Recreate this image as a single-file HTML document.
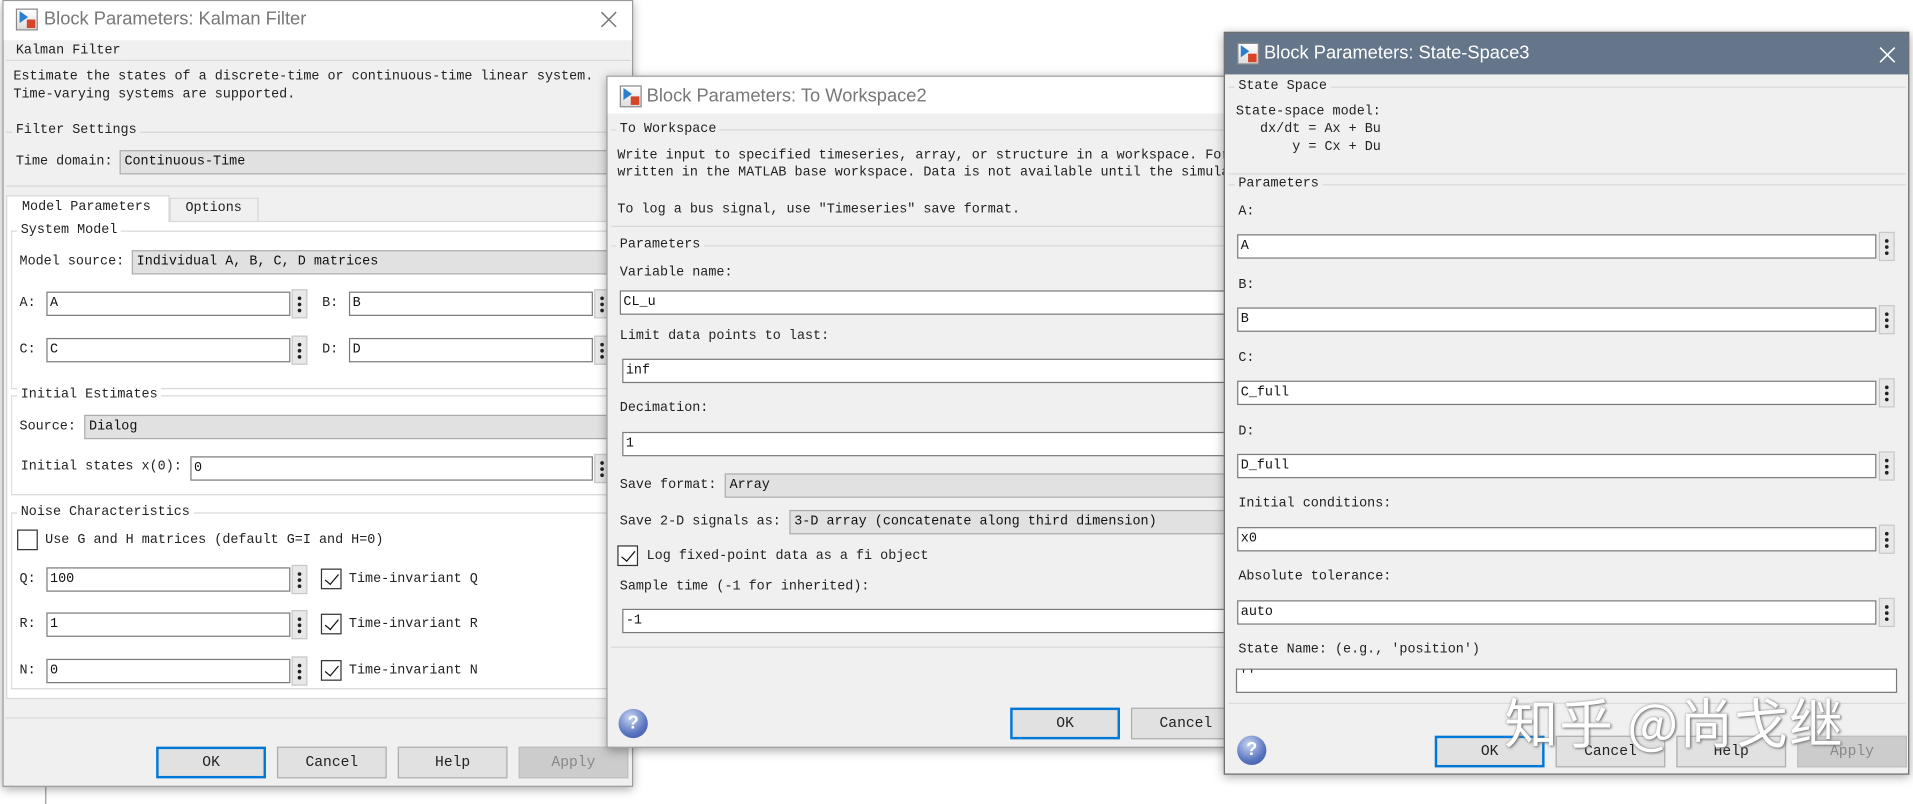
<!DOCTYPE html>
<html><head><meta charset="utf-8"><style>
*{box-sizing:border-box;margin:0;padding:0}
html,body{width:1913px;height:804px;overflow:hidden;background:#fff}
#w{position:absolute;left:0;top:0;width:1568px;height:659px;transform:scale(1.22003);transform-origin:0 0}
.a{position:absolute}
.t{position:absolute;font-family:"Liberation Mono","Noto Sans CJK SC",monospace;font-size:11px;color:#222;white-space:pre;line-height:14px}
.dlg{position:absolute;background:#f0f0f0;border:1px solid #9a9a9a;box-shadow:0 2px 8px rgba(0,0,0,.35)}
.tb{position:absolute;left:0;top:0;right:0;background:#fff}
.tt{position:absolute;font-family:"Liberation Sans",sans-serif;font-size:15px;color:#777;white-space:nowrap}
.ic{position:absolute;width:18px;height:18px;border:1px solid #888;background:linear-gradient(#fff,#ddd)}
.ic:before{content:"";position:absolute;left:2px;top:1px;border-left:7px solid #2a7fd0;border-top:5px solid transparent;border-bottom:5px solid transparent}
.ic:after{content:"";position:absolute;left:8px;top:8px;width:7px;height:7px;background:#d5452a}
.gb{position:absolute;border-top:1px solid #d8d8d8;border-bottom:1px solid #d8d8d8}
.f{position:absolute;height:20px;background:#fff;border:1px solid #7a7a7a;font-family:"Liberation Mono",monospace;font-size:11px;line-height:18px;padding-left:2px;color:#111;white-space:nowrap;overflow:hidden}
.dd{position:absolute;height:20px;background:#e1e1e1;border:1px solid #adadad;font-family:"Liberation Mono",monospace;font-size:11px;line-height:18px;padding-left:3px;color:#111;white-space:nowrap;overflow:hidden}
.dots{position:absolute;width:13px;height:24px;background:#e8e8e8;border:1px solid #c8c8c8}
.dots:before{content:"";position:absolute;left:4px;top:5px;width:3px;height:3px;background:#222;border-radius:50%;box-shadow:0 5px 0 #222,0 10px 0 #222}
.cb{position:absolute;width:17px;height:17px;background:#fff;border:1px solid #333}
.cb.k:after{content:"";position:absolute;left:5px;top:1px;width:5px;height:10px;border-right:1.5px solid #111;border-bottom:1.5px solid #111;transform:rotate(40deg)}
.bt{position:absolute;height:26px;width:90px;background:#e1e1e1;border:1px solid #adadad;font-family:"Liberation Mono",monospace;font-size:12px;line-height:24px;text-align:center;color:#222}
.bt.ok{border:2px solid #0078d7;line-height:22px}
.bt.dis{background:#ccc;border-color:#bfbfbf;color:#888}
.hp{position:absolute;width:24px;height:24px;border-radius:50%;background:radial-gradient(circle at 40% 30%,#c9d6f2,#5a74c0 60%,#3a50a0);color:#fff;font:bold 15px "Liberation Sans",sans-serif;text-align:center;line-height:24px}
</style></head><body><div id="w">

<div class="a" style="left:37px;top:640px;width:1px;height:19px;background:#999"></div>
<div class="a" style="left:490px;top:60px;width:14px;height:560px;background:#e8e8e8;border:1px solid #bbb"></div>

<!-- Kalman dialog -->
<div class="dlg" style="left:2px;top:0;width:517px;height:645px">
 <div class="tb" style="height:32px"></div>
 <div class="ic" style="left:10px;top:6px"></div>
 <div class="tt" style="left:33px;top:6px">Block Parameters: Kalman Filter</div>
 <svg class="a" style="left:489px;top:8px" width="14" height="14"><path d="M1 1L13 13M13 1L1 13" stroke="#777" stroke-width="1.2"/></svg>
</div>
<div class="gb" style="left:5px;top:49px;width:512px;height:60px"></div>
<div class="t" style="left:10px;top:35px;background:#f0f0f0;padding:0 3px">Kalman Filter</div>
<div class="t" style="left:11px;top:56px">Estimate the states of a discrete-time or continuous-time linear system.</div>
<div class="t" style="left:11px;top:71px">Time-varying systems are supported.</div>
<div class="gb" style="left:5px;top:108px;width:512px;height:45px"></div>
<div class="t" style="left:10px;top:100px;background:#f0f0f0;padding:0 3px">Filter Settings</div>
<div class="t" style="left:13px;top:126px">Time domain:</div>
<div class="dd" style="left:98px;top:123px;width:412px">Continuous-Time</div>

<div class="a" style="left:5px;top:181px;width:510px;height:392px;background:#fff;border:1px solid #d8d8d8"></div>
<div class="a" style="left:5px;top:160px;width:134px;height:22px;background:#fff;border:1px solid #d8d8d8;border-bottom:none"></div>
<div class="a" style="left:139px;top:162px;width:73px;height:20px;background:#f0f0f0;border:1px solid #d8d8d8"></div>
<div class="t" style="left:18px;top:163px">Model Parameters</div>
<div class="t" style="left:152px;top:164px">Options</div>

<div class="gb" style="left:9px;top:189px;width:506px;height:130px;border-left:1px solid #e0e0e0"></div>
<div class="t" style="left:14px;top:182px;background:#fff;padding:0 3px">System Model</div>
<div class="t" style="left:16px;top:208px">Model source:</div>
<div class="dd" style="left:108px;top:205px;width:400px">Individual A, B, C, D matrices</div>
<div class="t" style="left:16px;top:242px">A:</div><div class="f" style="left:38px;top:239px;width:200px">A</div><div class="dots" style="left:239px;top:237px"></div>
<div class="t" style="left:264px;top:242px">B:</div><div class="f" style="left:286px;top:239px;width:200px">B</div><div class="dots" style="left:487px;top:237px"></div>
<div class="t" style="left:16px;top:280px">C:</div><div class="f" style="left:38px;top:277px;width:200px">C</div><div class="dots" style="left:239px;top:275px"></div>
<div class="t" style="left:264px;top:280px">D:</div><div class="f" style="left:286px;top:277px;width:200px">D</div><div class="dots" style="left:487px;top:275px"></div>

<div class="gb" style="left:9px;top:324px;width:506px;height:82px;border-left:1px solid #e0e0e0"></div>
<div class="t" style="left:14px;top:317px;background:#fff;padding:0 3px">Initial Estimates</div>
<div class="t" style="left:16px;top:343px">Source:</div>
<div class="dd" style="left:69px;top:340px;width:440px">Dialog</div>
<div class="t" style="left:17px;top:376px">Initial states x(0):</div>
<div class="f" style="left:156px;top:374px;width:330px">0</div><div class="dots" style="left:487px;top:372px"></div>

<div class="gb" style="left:9px;top:420px;width:506px;height:145px;border-left:1px solid #e0e0e0"></div>
<div class="t" style="left:14px;top:413px;background:#fff;padding:0 3px">Noise Characteristics</div>
<div class="cb" style="left:14px;top:434px"></div>
<div class="t" style="left:37px;top:436px">Use G and H matrices (default G=I and H=0)</div>
<div class="t" style="left:16px;top:468px">Q:</div><div class="f" style="left:38px;top:465px;width:200px">100</div><div class="dots" style="left:239px;top:463px"></div>
<div class="cb k" style="left:263px;top:466px"></div><div class="t" style="left:286px;top:468px">Time-invariant Q</div>
<div class="t" style="left:16px;top:505px">R:</div><div class="f" style="left:38px;top:502px;width:200px">1</div><div class="dots" style="left:239px;top:500px"></div>
<div class="cb k" style="left:263px;top:503px"></div><div class="t" style="left:286px;top:505px">Time-invariant R</div>
<div class="t" style="left:16px;top:543px">N:</div><div class="f" style="left:38px;top:540px;width:200px">0</div><div class="dots" style="left:239px;top:538px"></div>
<div class="cb k" style="left:263px;top:541px"></div><div class="t" style="left:286px;top:543px">Time-invariant N</div>
<div class="a" style="left:4px;top:588px;width:513px;height:1px;background:#dadada"></div>
<div class="bt ok" style="left:128px;top:612px">OK</div>
<div class="bt" style="left:227px;top:612px">Cancel</div>
<div class="bt" style="left:326px;top:612px">Help</div>
<div class="bt dis" style="left:425px;top:612px">Apply</div>

<!-- To Workspace dialog -->
<div class="dlg" style="left:497px;top:62px;width:520px;height:551px">
 <div class="tb" style="height:30px"></div>
 <div class="ic" style="left:10px;top:7px"></div>
 <div class="tt" style="left:32px;top:7px">Block Parameters: To Workspace2</div>
</div>
<div class="gb" style="left:501px;top:106px;width:510px;height:80px"></div>
<div class="t" style="left:505px;top:99px;background:#f0f0f0;padding:0 3px">To Workspace</div>
<div class="t" style="left:506px;top:121px">Write input to specified timeseries, array, or structure in a workspace. For</div>
<div class="t" style="left:506px;top:135px">written in the MATLAB base workspace. Data is not available until the simula</div>
<div class="t" style="left:506px;top:165px">To log a bus signal, use "Timeseries" save format.</div>
<div class="gb" style="left:501px;top:201px;width:510px;height:330px"></div>
<div class="t" style="left:505px;top:194px;background:#f0f0f0;padding:0 3px">Parameters</div>
<div class="t" style="left:508px;top:217px">Variable name:</div>
<div class="f" style="left:508px;top:238px;width:510px">CL_u</div>
<div class="t" style="left:508px;top:269px">Limit data points to last:</div>
<div class="f" style="left:510px;top:294px;width:510px">inf</div>
<div class="t" style="left:508px;top:328px">Decimation:</div>
<div class="f" style="left:510px;top:354px;width:510px">1</div>
<div class="t" style="left:508px;top:391px">Save format:</div>
<div class="dd" style="left:594px;top:388px;width:420px">Array</div>
<div class="t" style="left:508px;top:421px">Save 2-D signals as:</div>
<div class="dd" style="left:647px;top:418px;width:370px">3-D array (concatenate along third dimension)</div>
<div class="cb k" style="left:506px;top:447px"></div>
<div class="t" style="left:530px;top:449px">Log fixed-point data as a fi object</div>
<div class="t" style="left:508px;top:474px">Sample time (-1 for inherited):</div>
<div class="f" style="left:510px;top:499px;width:510px">-1</div>
<div class="hp" style="left:507px;top:581px">?</div>
<div class="bt ok" style="left:828px;top:580px">OK</div>
<div class="bt" style="left:927px;top:580px">Cancel</div>

<!-- State-Space dialog -->
<div class="dlg" style="left:1003px;top:26px;width:562px;height:609px;border-color:#666">
 <div class="tb" style="height:34px;background:#65768a"></div>
 <div class="ic" style="left:10px;top:8px"></div>
 <div class="tt" style="left:32px;top:8px;color:#fff">Block Parameters: State-Space3</div>
 <svg class="a" style="left:536px;top:11px" width="14" height="14"><path d="M1 1L13 13M13 1L1 13" stroke="#fff" stroke-width="1.3"/></svg>
</div>
<div class="gb" style="left:1007px;top:71px;width:555px;height:72px"></div>
<div class="t" style="left:1012px;top:64px;background:#f0f0f0;padding:0 3px">State Space</div>
<div class="t" style="left:1013px;top:85px">State-space model:</div>
<div class="t" style="left:1013px;top:99px">   dx/dt = Ax + Bu</div>
<div class="t" style="left:1013px;top:114px">       y = Cx + Du</div>
<div class="gb" style="left:1007px;top:151px;width:555px;height:426px;border-bottom:none"></div>
<div class="a" style="left:1007px;top:576px;width:555px;height:1px;background:#dadada"></div>
<div class="t" style="left:1012px;top:144px;background:#f0f0f0;padding:0 3px">Parameters</div>
<div class="t" style="left:1015px;top:167px">A:</div><div class="f" style="left:1014px;top:192px;width:524px">A</div><div class="dots" style="left:1540px;top:190px"></div>
<div class="t" style="left:1015px;top:227px">B:</div><div class="f" style="left:1014px;top:252px;width:524px">B</div><div class="dots" style="left:1540px;top:250px"></div>
<div class="t" style="left:1015px;top:287px">C:</div><div class="f" style="left:1014px;top:312px;width:524px">C_full</div><div class="dots" style="left:1540px;top:310px"></div>
<div class="t" style="left:1015px;top:347px">D:</div><div class="f" style="left:1014px;top:372px;width:524px">D_full</div><div class="dots" style="left:1540px;top:370px"></div>
<div class="t" style="left:1015px;top:406px">Initial conditions:</div><div class="f" style="left:1014px;top:432px;width:524px">x0</div><div class="dots" style="left:1540px;top:430px"></div>
<div class="t" style="left:1015px;top:466px">Absolute tolerance:</div><div class="f" style="left:1014px;top:492px;width:524px">auto</div><div class="dots" style="left:1540px;top:490px"></div>
<div class="t" style="left:1015px;top:526px">State Name: (e.g., 'position')</div>
<div class="f" style="left:1013px;top:548px;width:542px;line-height:10px">''</div>
<div class="hp" style="left:1014px;top:603px">?</div>
<div class="bt ok" style="left:1176px;top:603px">OK</div>
<div class="bt" style="left:1275px;top:603px">Cancel</div>
<div class="bt" style="left:1374px;top:603px">Help</div>
<div class="bt dis" style="left:1473px;top:603px">Apply</div>
<div class="a" style="left:1233px;top:558px;font-family:'Noto Sans CJK SC',sans-serif;font-size:44px;color:#fff;white-space:nowrap;text-shadow:1px 1px 2px #777,0 0 2px #999;letter-spacing:1px">知乎 @尚戈继</div>

</div></body></html>
